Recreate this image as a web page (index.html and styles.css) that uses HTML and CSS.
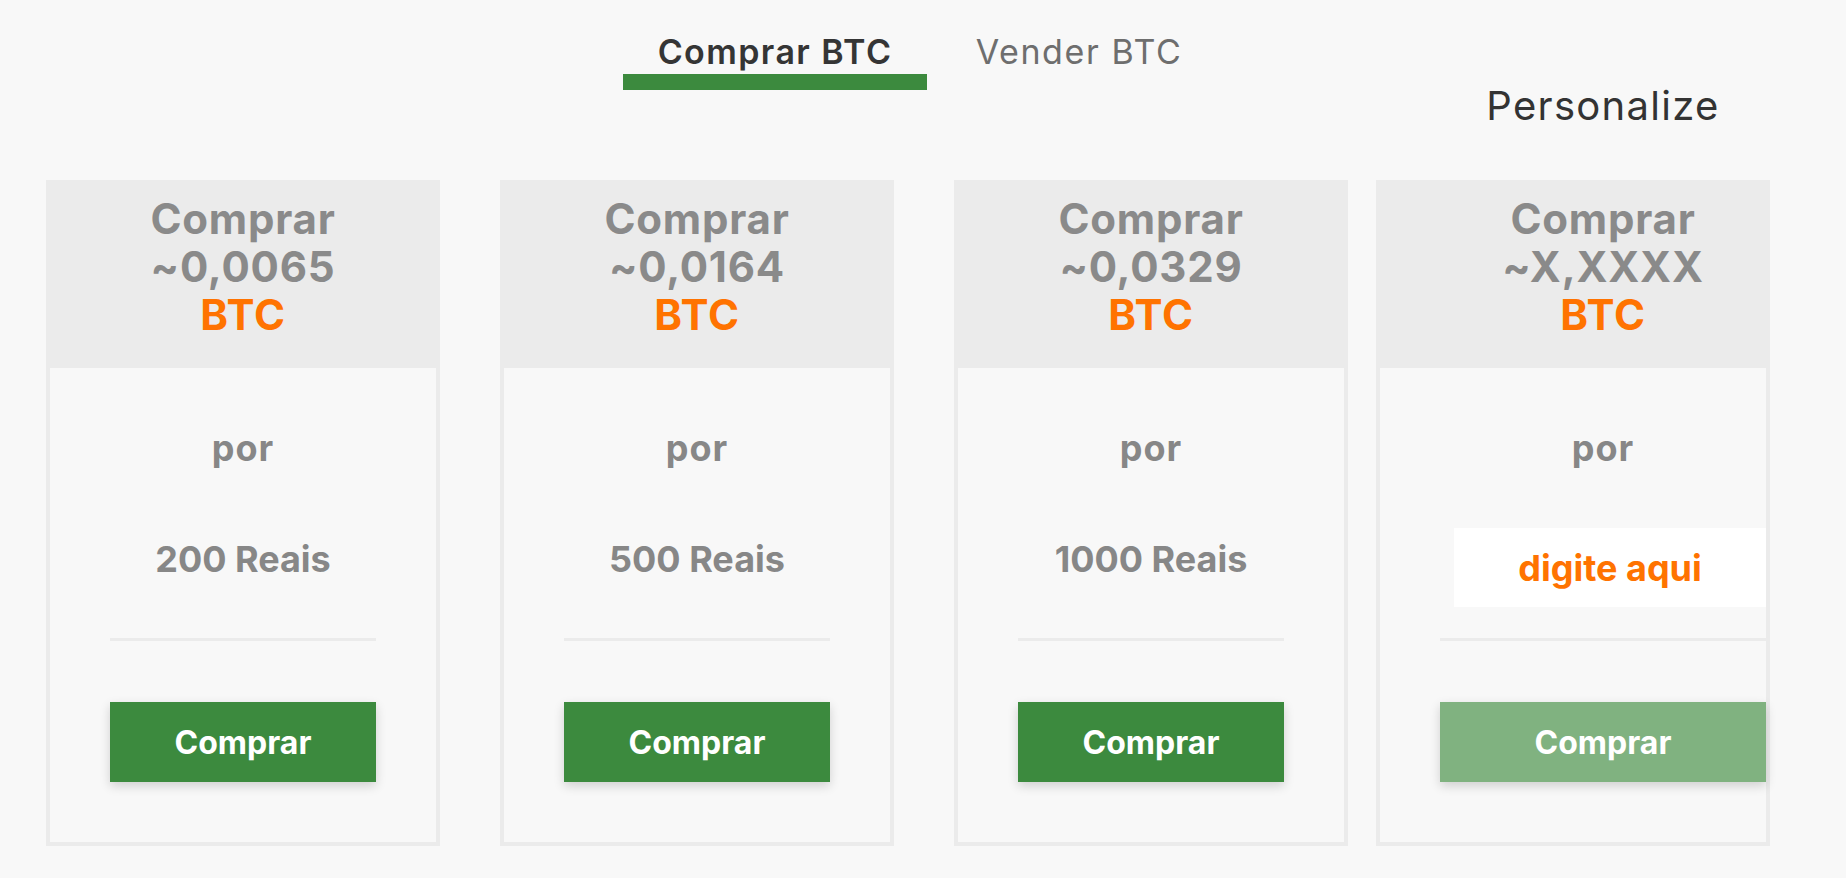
FILE: index.html
```html
<!DOCTYPE html>
<html lang="pt-BR">
<head>
  <meta charset="UTF-8" />
  <meta name="viewport" content="width=device-width, initial-scale=1.0"/>
  <title>Comprar BTC</title>
  <link rel="stylesheet" href="styles.css">
</head>
<body>
  <nav class="tabs">
    <a href="#" class="tab active">Comprar BTC</a>
    <a href="#" class="tab">Vender BTC</a>
  </nav>

  <main class="offers">
    <div class="fixed-offers">
      <div class="card">
        <div class="card-head">Comprar<br>~0,0065<br><span class="coin">BTC</span></div>
        <div class="card-body">
          <p class="por">por</p>
          <div class="amount"><p>200 Reais</p></div>
          <hr class="divider">
          <button class="buy-btn">Comprar</button>
        </div>
      </div>

      <div class="card">
        <div class="card-head">Comprar<br>~0,0164<br><span class="coin">BTC</span></div>
        <div class="card-body">
          <p class="por">por</p>
          <div class="amount"><p>500 Reais</p></div>
          <hr class="divider">
          <button class="buy-btn">Comprar</button>
        </div>
      </div>

      <div class="card">
        <div class="card-head">Comprar<br>~0,0329<br><span class="coin">BTC</span></div>
        <div class="card-body">
          <p class="por">por</p>
          <div class="amount"><p>1000 Reais</p></div>
          <hr class="divider">
          <button class="buy-btn">Comprar</button>
        </div>
      </div>
    </div>

    <div class="custom">
      <h2 class="custom-title">Personalize</h2>
      <div class="card">
        <div class="card-head">Comprar<br>~X,XXXX<br><span class="coin">BTC</span></div>
        <div class="card-body">
          <p class="por">por</p>
          <div class="amount"><input type="text" class="amount-input" placeholder="digite aqui"></div>
          <hr class="divider">
          <button class="buy-btn" disabled>Comprar</button>
        </div>
      </div>
    </div>
  </main>
</body>
</html>
```

FILE: styles.css
```css
* {
  box-sizing: border-box;
}

body {
  margin: 0;
  background-color: #f8f8f8;
  font-family: 'Inter', 'Open Sans', sans-serif;
}

.tabs {
  display: flex;
  justify-content: center;
  height: 90px;
  padding: 32px 0 0 8px;
}

.tab {
  width: 304px;
  text-align: center;
  font-size: 34px;
  line-height: 40px;
  font-weight: 400;
  letter-spacing: 1.6px;
  color: #6e6e6e;
  text-decoration: none;
}

.tab.active {
  font-weight: 600;
  letter-spacing: 1.4px;
  color: #353535;
  padding-bottom: 2px;
  border-bottom: 16px solid #3c8a3e;
}

.offers {
  display: flex;
  align-items: flex-end;
  gap: 28px;
  padding-left: 46px;
}

.fixed-offers {
  display: flex;
  gap: 60px;
}

.custom-title {
  margin: 0 0 58px;
  padding-left: 60px;
  text-align: center;
  font-size: 40px;
  line-height: 32px;
  font-weight: 400;
  letter-spacing: 1.3px;
  color: #333;
}

.card {
  width: 394px;
}

.card-head {
  height: 188px;
  padding-top: 15px;
  background: #ebebeb;
  text-align: center;
  font-size: 42px;
  line-height: 48px;
  font-weight: 700;
  letter-spacing: 0.8px;
  color: #8a8a8a;
}

.coin {
  color: #ff7300;
}

.card-body {
  border: 4px solid #ebebeb;
  border-top: 0;
  padding: 58px 60px 60px;
  text-align: center;
}

/* custom card keeps its content pushed to the right edge */
.custom .card-head {
  padding-left: 60px;
}

.custom .card-body {
  padding-right: 0;
}

.por {
  margin: 0 0 58px;
  font-size: 36px;
  line-height: 44px;
  font-weight: 700;
  letter-spacing: 1px;
  color: #878787;
}

.amount {
  height: 79px;
}

.amount p {
  margin: 0;
  font-size: 36px;
  line-height: 62px;
  font-weight: 700;
  color: #878787;
}

.amount-input {
  display: block;
  width: 312px;
  height: 79px;
  margin-left: 14px;
  border: none;
  background: #fff;
  text-align: center;
  font-family: inherit;
  font-size: 36px;
  font-weight: 700;
  color: #ff7300;
  outline: none;
}

.amount-input::placeholder {
  color: #ff7300;
  opacity: 1;
}

.divider {
  height: 3px;
  margin: 31px 0 61px;
  border: 0;
  background: #ebebeb;
}

.buy-btn {
  display: block;
  width: 100%;
  height: 80px;
  border: none;
  background-color: #3c8a3e;
  color: #fff;
  font-family: inherit;
  font-size: 32px;
  font-weight: 700;
  box-shadow: 0 4px 10px rgba(0,0,0,0.16);
  cursor: pointer;
}

.buy-btn:disabled {
  background-color: #80b280;
  cursor: default;
}
```
